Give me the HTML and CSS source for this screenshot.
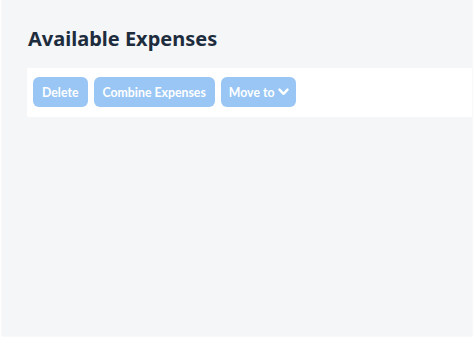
FILE: index.html
```html
<!DOCTYPE html>
<html lang="en">
<head>
<meta charset="utf-8">
<title>Available Expenses</title>
<link rel="stylesheet" href="styles.css">
</head>
<body>
<main class="panel">
  <h1 class="title">Available Expenses</h1>
  <div class="toolbar">
    <button class="btn" type="button">Delete</button>
    <button class="btn" type="button">Combine Expenses</button>
    <button class="btn btn-menu" type="button"><span>Move to</span>
      <svg class="chev" width="11" height="8" viewBox="0 0 11 8" aria-hidden="true"><path d="M1.5 1.6 L5.5 5.8 L9.5 1.6" fill="none" stroke="#fff" stroke-width="2.4" stroke-linecap="round" stroke-linejoin="round"/></svg>
    </button>
  </div>
</main>
</body>
</html>
```
FILE: styles.css
```css
html, body {
  margin: 0;
  padding: 0;
  background: #ffffff;
  height: 100%;
}
body {
  padding: 0 2px 2px 2px;
  box-sizing: border-box;
  font-family: "Noto Sans", "Open Sans", sans-serif;
}
.panel {
  height: 336px;
  background: #f5f6f7;
  box-shadow: 0 0 2px rgba(0, 0, 0, 0.08);
  padding: 24px 0 0 25px;
  box-sizing: border-box;
  display: flex;
  flex-direction: column;
}
.title {
  margin: 0 0 14px 1px;
  font-size: 20px;
  line-height: 30px;
  font-weight: 700;
  color: #1d2d3e;
}
.toolbar {
  background: #ffffff;
  height: 49px;
  box-sizing: border-box;
  display: flex;
  align-items: flex-start;
  gap: 6px;
  padding: 9px 0 0 6px;
}
.btn {
  height: 30px;
  border: none;
  border-radius: 6px;
  background: #99c6f4;
  color: #ffffff;
  font-family: Lato, "Noto Sans", sans-serif;
  font-weight: 700;
  font-size: 12.3px;
  padding: 0 9px;
  display: flex;
  align-items: center;
  gap: 3px;
}
.btn-menu {
  padding: 0 7px 0 8px;
}
.chev {
  display: block;
}
```
